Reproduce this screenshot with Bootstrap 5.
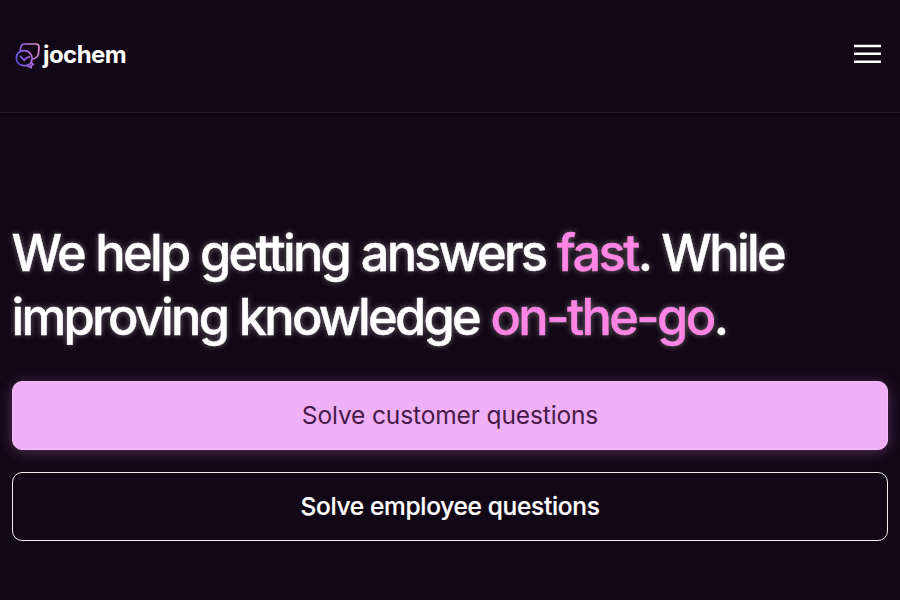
<!DOCTYPE html>
<html lang="en"><head><meta charset="utf-8"><meta name="viewport" content="width=device-width, initial-scale=1"><title>jochem</title>
<link href="https://cdn.jsdelivr.net/npm/bootstrap@5.3.0/dist/css/bootstrap.min.css" rel="stylesheet">
<style>
body{background:#120716;color:#fff;font-family:Inter,sans-serif;height:600px;overflow:hidden}
.topbar{height:113px;padding:0 19px 4px 15px;border-bottom:1px solid #211924}
.brand{font-size:24px;font-weight:700;letter-spacing:-.55px;line-height:30px;color:#fff;gap:2px;padding-top:1px}
.hero{padding:108px 12px 0}
.hero h1{font-size:50.5px;font-weight:500;line-height:64px;letter-spacing:-2.73px;word-spacing:.8px;text-shadow:0 0 6px rgba(255,255,255,.4);-webkit-text-stroke:.4px currentColor;margin:0 0 32px -.5px}
.hero h1 span{color:#ff85e4;letter-spacing:-2.6px}
.cta{height:69px;border-radius:10px;font-size:24.5px}
.cta-fill,.cta-fill:hover{background:#f0b0f6;color:#461a49;border:1px solid #f3bef7;box-shadow:0 2px 14px rgba(240,140,240,.3);margin-bottom:22px;letter-spacing:-.13px}
.cta-line,.cta-line:hover{border:1px solid #eee;color:#fff;font-weight:500;letter-spacing:-.33px;-webkit-text-stroke:.2px #fff}
</style></head><body>
<nav class="topbar d-flex align-items-center justify-content-between">
<a class="brand d-flex align-items-center text-decoration-none" href="#"><svg width="26" height="28" viewBox="20 20 78 84" fill="none" stroke="url(#tint)" stroke-width="5" stroke-linecap="round" stroke-linejoin="round"><defs><linearGradient id="tint" gradientUnits="userSpaceOnUse" x1="24" y1="72" x2="92" y2="48"><stop stop-color="#6258e8"/><stop offset=".5" stop-color="#a767df"/><stop offset="1" stop-color="#e58acb"/></linearGradient></defs><path d="M36 46L38 37Q40 29 48 29H82Q93 29 92 40L90 60Q88 69 80 72L71 75L68 84L75 90L68 94L69 100L56 94M71 75C71 88 60 95 47 94C33 93 24 84 24 71C24 58 34 49 47 49C61 49 71 59 71 71M36 66L48 78L53 72L63 67"/></svg><span>jochem</span></a>
<button class="btn p-0 border-0" aria-label="Menu"><svg class="d-block" width="27" height="20" stroke="#fff" stroke-width="2.4"><path d="M0 2h27M0 9.7h27M0 17.8h27"/></svg></button>
</nav>
<main class="hero"><h1>We help getting answers <span>fast</span>. While<br>improving knowledge <span>on-the-go</span>.</h1>
<a class="btn cta cta-fill d-flex align-items-center justify-content-center" href="#">Solve customer questions</a>
<a class="btn cta cta-line d-flex align-items-center justify-content-center" href="#">Solve employee questions</a></main>
<script src="https://cdn.jsdelivr.net/npm/bootstrap@5.3.0/dist/js/bootstrap.bundle.min.js"></script>
</body></html>
